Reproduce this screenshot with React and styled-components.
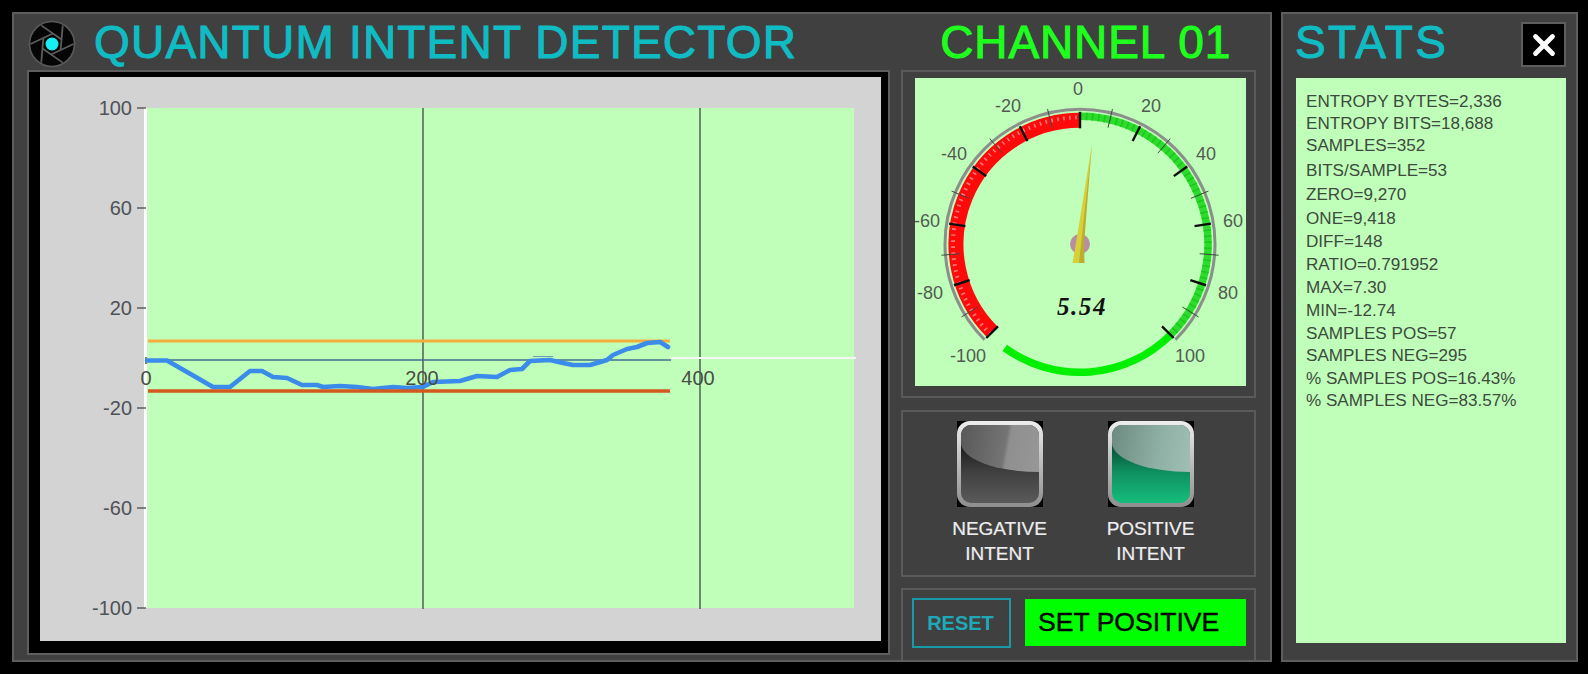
import React from 'react'
import styled, { createGlobalStyle } from 'styled-components'
import { X } from 'lucide-react'

const GlobalStyle = createGlobalStyle`
  html, body {
    margin: 0;
    padding: 0;
    background: #000;
  }
  * {
    box-sizing: border-box;
  }
`

const Page = styled.div`
  display: flex;
  gap: 9px;
  width: 1588px;
  height: 674px;
  padding: 12px 10px 12px 12px;
  background: #000;
  font-family: 'Liberation Sans', Arial, sans-serif;
`

const Window = styled.div`
  display: flex;
  flex-direction: column;
  width: ${(p) => p.$width}px;
  height: 650px;
  border: 2px solid #5e5e5e;
  background: #404040;
  overflow: hidden;
`

const Header = styled.div`
  display: flex;
  align-items: flex-start;
  flex: none;
  height: ${(p) => p.$height}px;
  padding: 0 10px 0 14px;
`

const Title = styled.div`
  font-size: 46px;
  letter-spacing: ${(p) => p.$spacing}px;
  line-height: 56px;
  color: ${(p) => p.$color || '#10bcc4'};
  margin-left: ${(p) => p.$left}px;
  white-space: nowrap;
  -webkit-text-stroke: 1px ${(p) => p.$color || '#10bcc4'};
`

const LogoBox = styled.div`
  flex: none;
  height: 48px;
  margin-top: 6px;
`

const Body = styled.div`
  display: flex;
  gap: 11px;
  flex: 1;
  padding: 0 14px 0 13px;
  min-height: 0;
`

const ChartFrame = styled.div`
  flex: none;
  width: 863px;
  height: 585px;
  padding: 5px 7px 12px 11px;
  border: 2px solid #5e5e5e;
  background: #000;
`

const ChartPanel = styled.svg`
  display: block;
  width: 841px;
  height: 564px;
  background: #d3d3d3;
  font-family: 'Liberation Sans', Arial, sans-serif;
`

const Side = styled.div`
  display: flex;
  flex-direction: column;
  flex: none;
  width: 355px;
`

const GaugeFrame = styled.div`
  height: 328px;
  padding: 6px 8px 10px 12px;
  border: 2px solid #5a5a5a;
`

const GaugeSvg = styled.svg`
  display: block;
  width: 331px;
  height: 308px;
  background: #c0ffb9;
  font-family: 'Liberation Sans', Arial, sans-serif;
`

const IntentFrame = styled.div`
  display: flex;
  height: 167px;
  margin-top: 12px;
  padding: 9px 0 0 21px;
  border: 2px solid #5a5a5a;
`

const IntentCol = styled.div`
  display: flex;
  flex-direction: column;
  align-items: center;
  width: 151px;
`

const Lamp = styled.div`
  position: relative;
  width: 86px;
  height: 86px;
  padding: 0;
  background: #000;
  &::before {
    content: '';
    position: absolute;
    inset: 0;
    border-radius: 13px;
    background: linear-gradient(180deg, #eeeeee 0%, #c0c0c0 45%, #8e8e8e 100%);
  }
`

const LampFace = styled.div`
  position: absolute;
  inset: 4px;
  border-radius: 10px;
  overflow: hidden;
  background: ${(p) =>
    p.$on
      ? 'linear-gradient(180deg, #07553a 30%, #0f8f60 60%, #16bd7c 100%)'
      : 'linear-gradient(180deg, #1f1f1f 30%, #404040 60%, #5a5a5a 100%)'};
  &::before {
    content: '';
    position: absolute;
    top: 0;
    left: 0;
    width: 100%;
    height: 47px;
    border-bottom-left-radius: 100% 62%;
    background: ${(p) =>
      p.$on
        ? 'linear-gradient(100deg, #6d8a80 0%, #8fb0a5 60%, #a0bfb4 100%)'
        : 'linear-gradient(100deg, #585858 0%, #747474 55%, #8f8f8f 60%, #979797 100%)'};
  }
`

const LampLabel = styled.div`
  margin-top: 10px;
  font-size: 19px;
  line-height: 24.5px;
  color: #eeeeee;
  text-align: center;
  -webkit-text-stroke: 0.2px #eeeeee;
`

const ActionFrame = styled.div`
  display: flex;
  align-items: flex-start;
  gap: 14px;
  flex: 1;
  margin-top: 11px;
  padding: 8px 0 0 9px;
  border: 2px solid #5a5a5a;
  border-bottom: none;
`

const ResetButton = styled.button`
  width: 99px;
  height: 50px;
  padding: 0 2px 0 0;
  border: 2px solid #189aa8;
  background: transparent;
  color: #1fa9b8;
  font-family: inherit;
  font-size: 20px;
  font-weight: bold;
`

const SetButton = styled.button`
  width: 221px;
  height: 47px;
  margin-top: 1px;
  padding: 0 0 0 13px;
  border: none;
  background: #00ff00;
  color: #000;
  font-family: inherit;
  font-size: 26.6px;
  text-align: left;
  -webkit-text-stroke: 0.4px #000;
`

const StatsBox = styled.div`
  width: 270px;
  height: 565px;
  margin: 0 0 0 13px;
  padding: 13px 0 0 10px;
  background: #c0ffb9;
  color: #3d4a3d;
  font-size: 17.1px;
`

const StatLine = styled.div`
  height: ${(p) => p.$height}px;
  line-height: ${(p) => p.$height}px;
  white-space: nowrap;
`

const CloseButton = styled.button`
  display: flex;
  align-items: center;
  justify-content: center;
  flex: none;
  width: 45px;
  height: 45px;
  margin: 8px 0 0 auto;
  padding: 0;
  border: 2px solid #5e5e5e;
  background: #000;
  color: #fff;
`

const STATS = [
  ['ENTROPY BYTES=2,336', 21.5],
  ['ENTROPY BITS=18,688', 21.5],
  ['SAMPLES=352', 24],
  ['BITS/SAMPLE=53', 25],
  ['ZERO=9,270', 24],
  ['ONE=9,418', 23],
  ['DIFF=148', 23],
  ['RATIO=0.791952', 23],
  ['MAX=7.30', 23],
  ['MIN=-12.74', 23],
  ['SAMPLES POS=57', 23],
  ['SAMPLES NEG=295', 22.5],
  ['% SAMPLES POS=16.43%', 22],
  ['% SAMPLES NEG=83.57%', 22],
]

const SERIES = [
  [147, 360.5], [167, 360.5], [187, 372], [213, 387], [230, 387], [250, 371], [262, 371],
  [273, 377], [287, 378], [302, 385], [317, 385], [323, 387], [340, 386], [357, 387],
  [373, 389], [393, 387], [407, 388], [423, 387], [433, 382], [460, 381], [477, 376],
  [497, 377], [510, 370], [522, 369], [530, 361], [550, 360], [563, 363], [573, 365],
  [590, 365], [607, 360], [613, 355], [627, 349], [637, 347], [647, 343], [660, 342],
  [668, 347],
]

const Y_TICKS = [
  [100, 108], [60, 208], [20, 308], [-20, 408], [-60, 508], [-100, 608],
]

const Chart = () => (
  <ChartPanel viewBox="40 77 841 564">
    <rect x="146" y="108" width="708" height="500" fill="#c0ffb9" />
    <rect x="144" y="108" width="3" height="500" fill="#fff" />
    <line x1="423" y1="108" x2="423" y2="609" stroke="#46584a" strokeWidth="1.4" />
    <line x1="700" y1="108" x2="700" y2="609" stroke="#46584a" strokeWidth="1.4" />
    {Y_TICKS.map(([label, y]) => (
      <g key={label}>
        <line x1="137" y1={y} x2="146" y2={y} stroke="#555" strokeWidth="1.4" />
        <text x="132" y={y + 7} fontSize="20" fill="#4f5258" textAnchor="end">{label}</text>
      </g>
    ))}
    <line x1="670" y1="358" x2="856" y2="358" stroke="#f6f6f6" strokeWidth="1.8" />
    <line x1="146" y1="360" x2="671" y2="360" stroke="#3d6f8f" strokeWidth="1.5" />
    <line x1="146" y1="357" x2="146" y2="364" stroke="#445" strokeWidth="1.4" />
    <line x1="533" y1="356.5" x2="553" y2="356.5" stroke="#6a9ab0" strokeWidth="1" />
    <line x1="148" y1="341" x2="670" y2="341" stroke="#f4ad3c" strokeWidth="3" />
    <polyline
      points={SERIES.map((p) => p.join(',')).join(' ')}
      fill="none"
      stroke="#3b8bea"
      strokeWidth="4.6"
      strokeLinejoin="round"
      strokeLinecap="round"
    />
    <line x1="148" y1="391" x2="670" y2="391" stroke="#d2581e" strokeWidth="3.5" />
    <text x="146" y="385" fontSize="20" fill="#4a4d44" textAnchor="middle">0</text>
    <text x="422" y="385" fontSize="20" fill="#4a4d44" textAnchor="middle">200</text>
    <text x="698" y="385" fontSize="20" fill="#4a4d44" textAnchor="middle">400</text>
  </ChartPanel>
)

const CX = 1080
const CY = 244.3

const polar = (r, deg) => {
  const a = (deg * Math.PI) / 180
  return [CX + r * Math.sin(a), CY - r * Math.cos(a)]
}

const arcPath = (r, from, to) => {
  const [x1, y1] = polar(r, from)
  const [x2, y2] = polar(r, to)
  return `M${x1} ${y1} A${r} ${r} 0 ${to - from > 180 ? 1 : 0} 1 ${x2} ${y2}`
}

const GAUGE_LABELS = [
  ['0', 1078, 89], ['-20', 1008, 106], ['20', 1151, 106], ['-40', 954, 154], ['40', 1206, 154],
  ['-60', 927, 221], ['60', 1233, 221], ['-80', 930, 293], ['80', 1228, 293],
  ['-100', 968, 356], ['100', 1190, 356],
]

const MAJOR = [-135, -108, -81, -54, -27, 0, 27, 54, 81, 108, 135]
const MINOR = [-121.5, -94.5, -67.5, -40.5, -13.5, 13.5, 40.5, 67.5, 94.5, 121.5]

const Gauge = () => (
  <GaugeSvg viewBox="915 78 331 308">
    <path d={arcPath(135, -135, 135)} fill="none" stroke="#8b8f8b" strokeWidth="3" />
    <path d={arcPath(124, -135, 0)} fill="none" stroke="#ff0a0a" strokeWidth="15" />
    <path d={arcPath(127, -135, 0)} fill="none" stroke="#ff7a7a" strokeWidth="4" strokeDasharray="1.6 4.4" />
    <path d={arcPath(128, 0, 135)} fill="none" stroke="#2cdc2c" strokeWidth="7.5" />
    <path d={arcPath(128, 0, 135)} fill="none" stroke="#1cc81c" strokeWidth="7.5" strokeDasharray="1.6 4.4" />
    <path d={arcPath(128, 135, 216)} fill="none" stroke="#00f000" strokeWidth="7.5" />
    {MINOR.map((deg) => {
      const [x1, y1] = polar(120, deg)
      const [x2, y2] = polar(139, deg)
      return <line key={deg} x1={x1} y1={y1} x2={x2} y2={y2} stroke="#3f4a3f" strokeWidth="1" />
    })}
    {MAJOR.map((deg) => {
      const [x1, y1] = polar(116, deg)
      const [x2, y2] = polar(132.5, deg)
      return <line key={deg} x1={x1} y1={y1} x2={x2} y2={y2} stroke="#0c0c0c" strokeWidth="2.4" />
    })}
    {GAUGE_LABELS.map(([label, x, y]) => (
      <text key={label} x={x} y={y + 6} fontSize="18" fill="#535a53" textAnchor="middle">{label}</text>
    ))}
    <circle cx={CX} cy={244} r="10" fill="#b88fa0" />
    <polygon points="1092,144 1076,243 1072.5,263 1080,263" fill="#d8d038" />
    <polygon points="1092,144 1084,244 1084.5,263 1079,263" fill="#b9ae2e" />
    <text
      x="1082"
      y="315"
      fontFamily="'Liberation Serif', serif"
      fontSize="25"
      fontWeight="bold"
      fontStyle="italic"
      letterSpacing="1.6"
      fill="#111"
      textAnchor="middle"
    >
      5.54
    </text>
  </GaugeSvg>
)

const BLADES = [0, 60, 120, 180, 240, 300]

const Logo = () => {
  const point = (r, deg) => {
    const a = (deg * Math.PI) / 180
    return [24 + r * Math.cos(a), 24 + r * Math.sin(a)]
  }
  return (
    <svg width="48" height="48" viewBox="0 0 48 48">
      <circle cx="24" cy="24" r="22.5" fill="#050505" stroke="#5a5a5a" strokeWidth="1.6" />
      {BLADES.map((deg) => {
        const [x1, y1] = point(21.5, deg)
        const [x2, y2] = point(10.5, deg + 95)
        return <line key={deg} x1={x1} y1={y1} x2={x2} y2={y2} stroke="#5c5c5c" strokeWidth="1.8" />
      })}
      <circle cx="24" cy="24" r="6.5" fill="#18eef2" />
    </svg>
  )
}

export default function App() {
  return (
    <>
      <GlobalStyle />
      <Page>
        <Window $width={1260}>
          <Header $height={56}>
            <LogoBox>
              <Logo />
            </LogoBox>
            <Title $left={18} $spacing={1.2}>QUANTUM INTENT DETECTOR</Title>
            <Title $left={143} $spacing={0.9} $color="#1eff1e">CHANNEL 01</Title>
          </Header>
          <Body>
            <ChartFrame>
              <Chart />
            </ChartFrame>
            <Side>
              <GaugeFrame>
                <Gauge />
              </GaugeFrame>
              <IntentFrame>
                <IntentCol>
                  <Lamp><LampFace /></Lamp>
                  <LampLabel>NEGATIVE<br />INTENT</LampLabel>
                </IntentCol>
                <IntentCol>
                  <Lamp><LampFace $on /></Lamp>
                  <LampLabel>POSITIVE<br />INTENT</LampLabel>
                </IntentCol>
              </IntentFrame>
              <ActionFrame>
                <ResetButton>RESET</ResetButton>
                <SetButton>SET POSITIVE</SetButton>
              </ActionFrame>
            </Side>
          </Body>
        </Window>
        <Window $width={297}>
          <Header $height={64}>
            <Title $left={-2} $spacing={2.4}>STATS</Title>
            <CloseButton>
              <X size={34} strokeWidth={3.4} />
            </CloseButton>
          </Header>
          <StatsBox>
            {STATS.map(([text, height]) => (
              <StatLine key={text} $height={height}>{text}</StatLine>
            ))}
          </StatsBox>
        </Window>
      </Page>
    </>
  )
}
